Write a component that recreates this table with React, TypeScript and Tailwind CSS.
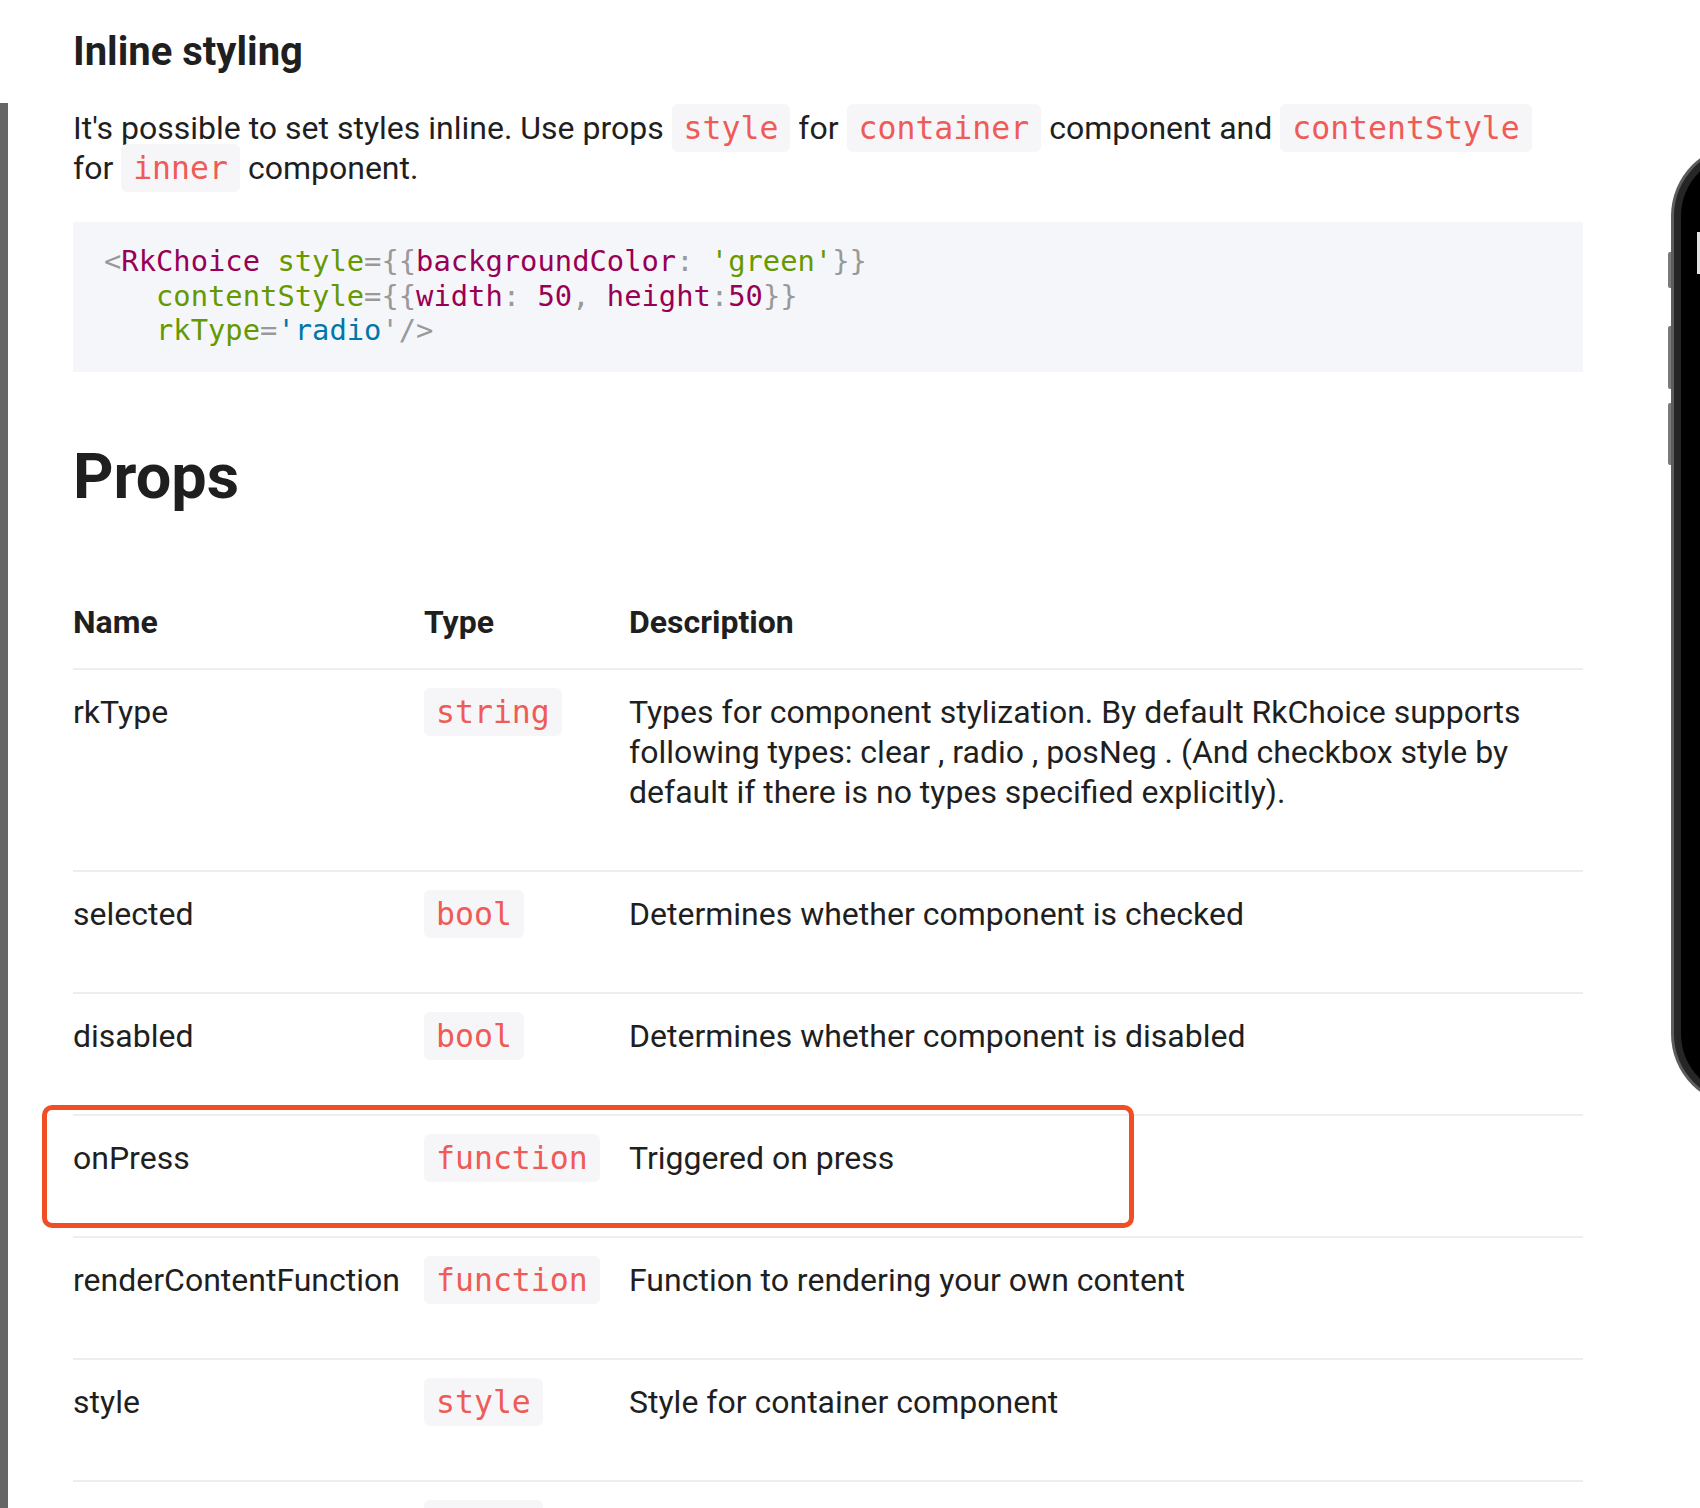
import React from 'react';

const mono = "font-['DejaVu_Sans_Mono','Liberation_Mono',monospace]";

function Code({ children }: { children: React.ReactNode }) {
  return (
    <code
      className={`${mono} rounded-[6px] bg-[#f6f6f8] px-[12px] py-[6px] text-[31.5px] leading-none text-[#ef5b57]`}
    >
      {children}
    </code>
  );
}

const P = ({ c }: { c: string }) => <span className="text-[#999999]">{c}</span>;
const T = ({ c }: { c: string }) => <span className="text-[#990055]">{c}</span>;
const A = ({ c }: { c: string }) => <span className="text-[#669900]">{c}</span>;
const V = ({ c }: { c: string }) => <span className="text-[#0077aa]">{c}</span>;

type Row = { name: string; type: string; desc: string[] };

const rows: Row[] = [
  {
    name: 'rkType',
    type: 'string',
    desc: [
      'Types for component stylization. By default RkChoice supports',
      'following types: clear , radio , posNeg . (And checkbox style by',
      'default if there is no types specified explicitly).',
    ],
  },
  { name: 'selected', type: 'bool', desc: ['Determines whether component is checked'] },
  { name: 'disabled', type: 'bool', desc: ['Determines whether component is disabled'] },
  { name: 'onPress', type: 'function', desc: ['Triggered on press'] },
  { name: 'renderContentFunction', type: 'function', desc: ['Function to rendering your own content'] },
  { name: 'style', type: 'style', desc: ['Style for container component'] },
  { name: 'contentStyle', type: 'style', desc: ['Style for inner component'] },
];

function Phone() {
  return (
    <>
      {/* side buttons */}
      <div className="absolute left-[1668px] top-[252px] h-[36px] w-[5px] rounded-l-[2px] bg-[#7a7a7a]" />
      <div className="absolute left-[1668px] top-[326px] h-[63px] w-[5px] rounded-l-[2px] bg-[#7a7a7a]" />
      <div className="absolute left-[1668px] top-[403px] h-[62px] w-[5px] rounded-l-[2px] bg-[#7a7a7a]" />
      <div className="absolute left-[1671px] top-[144px] h-[962px] w-[220px] rounded-[72px] bg-[#5c5c5c] p-[3px]">
        <div className="h-full w-full rounded-[69px] bg-[#262626] p-[7px]">
          <div className="h-full w-full rounded-[62px] bg-black" />
        </div>
      </div>
      <div className="absolute left-[1697px] top-[232px] h-[42px] w-[3px] bg-[#e2e2e2]" />
    </>
  );
}

export default function App() {
  return (
    <div className="relative h-[1508px] w-[1700px] overflow-hidden bg-white font-['Roboto','Liberation_Sans',sans-serif] text-[#1f1f1f]">
      <div className="absolute bottom-0 left-0 top-[103px] w-[8px] bg-[#666666]" />
      <Phone />

      <main className="w-[1583px] pl-[73px]">
        <h3 className="pt-[28px] text-[40px] font-bold leading-[48px]">Inline styling</h3>

        <p className="mt-[32px] text-[32px] leading-[40px]">
          <span className="whitespace-nowrap">
            It's possible to set styles inline. Use props <Code>style</Code> for <Code>container</Code>{' '}
            component and <Code>contentStyle</Code>
          </span>
          <br />
          for <Code>inner</Code> component.
        </p>

        <pre
          className={`${mono} mt-[34px] bg-[#f5f6fa] pb-[24px] pl-[31px] pt-[22px] text-[28.8px] leading-[34.5px] text-[#333]`}
        >
          <div className="whitespace-pre">
            <P c="<" />
            <T c="RkChoice" /> <A c="style" />
            <P c="={{" />
            <T c="backgroundColor" />
            <P c=":" /> <A c="'green'" />
            <P c="}}" />
          </div>
          <div className="whitespace-pre">
            {'   '}
            <A c="contentStyle" />
            <P c="={{" />
            <T c="width" />
            <P c=":" /> <T c="50" />
            <P c="," /> <T c="height" />
            <P c=":" />
            <T c="50" />
            <P c="}}" />
          </div>
          <div className="whitespace-pre">
            {'   '}
            <A c="rkType" />
            <P c="=" />
            <V c="'radio" />
            <P c="'/>" />
          </div>
        </pre>

        <h2 className="mt-[67px] text-[63px] font-bold leading-[76px]">Props</h2>

        <table className="mt-[87px] w-[1510px] table-fixed border-collapse text-left text-[32px] leading-[40px]">
          <colgroup>
            <col className="w-[351px]" />
            <col className="w-[205px]" />
            <col />
          </colgroup>
          <thead>
            <tr className="border-b-2 border-[#eeeeee]">
              <th className="pb-[26px] font-bold">Name</th>
              <th className="pb-[26px] font-bold">Type</th>
              <th className="pb-[26px] font-bold">Description</th>
            </tr>
          </thead>
          <tbody>
            {rows.map((r) => (
              <tr key={r.name} className="border-b-2 border-[#eeeeee] align-top">
                <td className="whitespace-nowrap pb-[58px] pt-[22px]">{r.name}</td>
                <td className="pb-[58px] pt-[22px]">
                  <Code>{r.type}</Code>
                </td>
                <td className="pb-[58px] pt-[22px]">
                  {r.desc.map((l) => (
                    <div key={l} className="whitespace-nowrap">
                      {l}
                    </div>
                  ))}
                </td>
              </tr>
            ))}
          </tbody>
        </table>
      </main>

      {/* highlight around the onPress row */}
      <div className="absolute left-[42px] top-[1105px] h-[123px] w-[1092px] rounded-[10px] border-[5px] border-[#f04f25]" />
    </div>
  );
}
